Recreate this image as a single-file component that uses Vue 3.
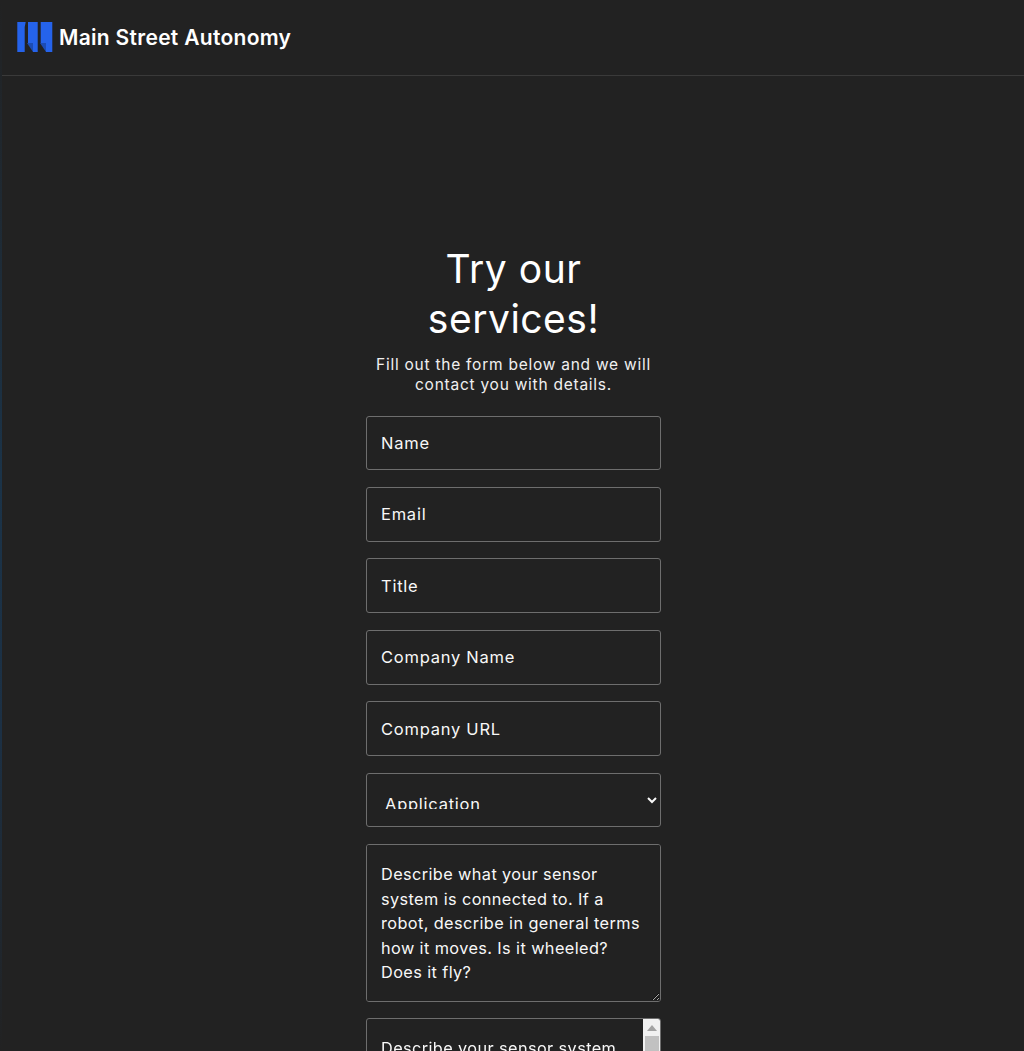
<template>
  <div class="page">
    <header class="topbar">
      <svg class="logo" width="36" height="31" viewBox="0 0 36 31" aria-hidden="true">
        <path d="M0.300 0H8.700L7.700 5V30H0.300Z" fill="#2563eb" />
        <path d="M11 0H20.700V30H16V21H11Z" fill="#2563eb" />
        <path d="M10 21H16V30Z" fill="#1c4cb5" />
        <path d="M23.700 0H35.300V30H29V21H23.700Z" fill="#2563eb" />
        <path d="M23 21H29V30Z" fill="#1c4cb5" />
      </svg>
      <span class="brand">Main Street Autonomy</span>
    </header>
    <main class="content">
      <h1 class="title">Try our services!</h1>
      <p class="lead">Fill out the form below and we will contact you with details.</p>
      <form class="form" @submit.prevent>
        <input v-for="f in fields" :key="f" class="field" type="text" :placeholder="f" />
        <select class="field select">
          <option>Application</option>
        </select>
        <textarea class="field area" placeholder="Describe what your sensor system is connected to. If a robot, describe in general terms how it moves. Is it wheeled? Does it fly?"></textarea>
        <div class="scroll-wrap">
          <textarea class="field area scroll" placeholder="Describe your sensor system"></textarea>
          <div class="scrollbar" aria-hidden="true">
            <svg class="scroll-arrow" width="10" height="6" viewBox="0 0 10 6"><path d="M5 0L10 6H0Z" fill="#a3a3a3" /></svg>
            <div class="scroll-thumb"></div>
          </div>
        </div>
      </form>
    </main>
  </div>
</template>

<script setup>
const fields = ['Name', 'Email', 'Title', 'Company Name', 'Company URL']
</script>

<style>
html, body { margin: 0; background: #222222; }
</style>

<style scoped>
.page {
  position: relative;
  height: 1051px;
  overflow: hidden;
  background: #222222;
  color: #fff;
  font-family: "Inter", "Liberation Sans", sans-serif;
}
.page::before {
  content: "";
  position: absolute;
  left: 0;
  top: 0;
  bottom: 0;
  width: 2px;
  background: linear-gradient(#222222, #1b3348 45%, #1c3044 70%, #222222);
}
.topbar {
  height: 75px;
  border-bottom: 1px solid #3a3a3a;
  display: flex;
  align-items: center;
  padding-left: 17px;
  gap: 6px;
}
.logo { display: block; }
.brand {
  font-size: 21px;
  font-weight: 600;
  letter-spacing: 0.3px;
  color: #fff;
  white-space: nowrap;
}
.content {
  display: flex;
  flex-direction: column;
  align-items: center;
  padding-top: 168px;
  padding-left: 3px;
}
.title {
  margin: 0;
  width: 240px;
  text-align: center;
  font-size: 39px;
  line-height: 50px;
  font-weight: 400;
  letter-spacing: 0.5px;
  color: #fff;
}
.lead {
  margin: 11px 0 0;
  width: 295px;
  text-align: center;
  font-size: 15.500px;
  line-height: 19.500px;
  letter-spacing: 0.750px;
  color: #f0f0f0;
}
.form {
  margin-top: 21.700px;
  width: 295px;
  display: flex;
  flex-direction: column;
  gap: 16.600px;
}
.field {
  box-sizing: border-box;
  display: block;
  width: 295px;
  height: 54.800px;
  flex: none;
  margin: 0;
  padding: 0 14px;
  background: #222222;
  border: 1px solid #6e6e6e;
  border-radius: 3px;
  color: #f8f8f8;
  font: 400 16.500px/24.500px "Inter", "Liberation Sans", sans-serif;
  letter-spacing: 0.750px;
  outline: none;
}
.field::placeholder { color: #f8f8f8; opacity: 1; }
.select { padding: 19px 14px 17px; }
.area {
  height: 157.500px;
  padding: 17px 8px 17px 14px;
  resize: vertical;
  font-size: 16.300px;
  letter-spacing: 0.400px;
}
.scroll-wrap {
  position: relative;
  flex: none;
}
.scroll {
  height: 120px;
  resize: none;
}
.scrollbar {
  position: absolute;
  top: 1px;
  right: 1px;
  bottom: 1px;
  width: 17px;
  border-top-right-radius: 2px;
  background: #f1f1f1;
  display: flex;
  flex-direction: column;
  align-items: center;
  padding-top: 6px;
  box-sizing: border-box;
}
.scroll-arrow { display: block; flex: none; }
.scroll-thumb {
  margin-top: 5px;
  width: 14px;
  flex: 1;
  background: #c1c1c1;
}
</style>
